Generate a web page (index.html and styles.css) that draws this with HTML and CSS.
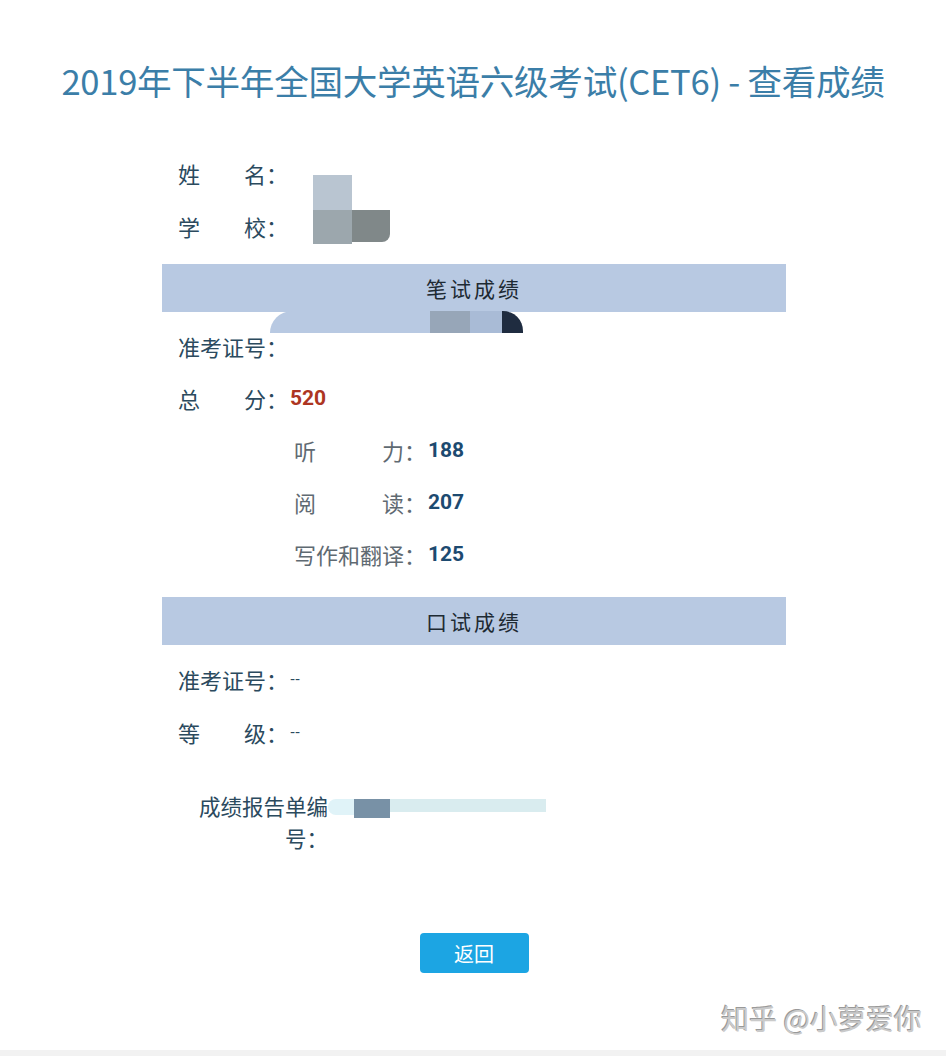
FILE: index.html
```html
<!DOCTYPE html>
<html lang="zh-CN">
<head>
<meta charset="utf-8">
<title>查看成绩</title>
<link rel="stylesheet" href="styles.css">
</head>
<body>
<div class="page">
  <h1 class="title">2019年下半年全国大学英语六级考试(CET6) - 查看成绩</h1>

  <div class="card">
    <div class="info">
      <div class="row"><span class="lbl">姓名</span><span class="colon">：</span><span class="val"></span></div>
      <div class="row"><span class="lbl">学校</span><span class="colon">：</span><span class="val"></span></div>
      <div class="mosaic m-name">
        <i class="tile t1"></i><i class="tile t2"></i><i class="tile t3"></i>
      </div>
    </div>

    <div class="bar">笔试成绩</div>

    <div class="info written">
      <div class="mosaic m-id">
        <i class="tile t4"></i><i class="tile t5"></i><i class="tile t6"></i><i class="tile t7"></i>
      </div>
      <div class="row"><span class="lbl">准考证号</span><span class="colon">：</span><span class="val"></span></div>
      <div class="row"><span class="lbl">总分</span><span class="colon">：</span><span class="val total">520</span></div>
      <div class="row sub"><span class="lbl wide">听力</span><span class="colon">：</span><span class="val score">188</span></div>
      <div class="row sub"><span class="lbl wide">阅读</span><span class="colon">：</span><span class="val score">207</span></div>
      <div class="row sub"><span class="lbl wide">写作和翻译</span><span class="colon">：</span><span class="val score">125</span></div>
    </div>

    <div class="bar bar2">口试成绩</div>

    <div class="info oral">
      <div class="row tall"><span class="lbl">准考证号</span><span class="colon">：</span><span class="val dash">--</span></div>
      <div class="row tall"><span class="lbl">等级</span><span class="colon">：</span><span class="val dash">--</span></div>
    </div>

    <div class="report">
      <span class="report-lbl">成绩报告单编号：</span>
      <span class="report-val"><i class="tile t8"></i><i class="tile t9"></i><i class="tile t10"></i></span>
    </div>

    <div class="actions"><button class="btn" type="button">返回</button></div>
  </div>

  <div class="watermark">知乎 @小萝爱你</div>
  <div class="bottom-strip"></div>
</div>
</body>
</html>
```

FILE: styles.css
```css
html, body {
  margin: 0;
  padding: 0;
  background: #ffffff;
}
body {
  font-family: "Noto Sans CJK SC", "Noto Sans", sans-serif;
  width: 946px;
  height: 1056px;
  overflow: hidden;
}
.page {
  position: relative;
  height: 1056px;
  display: flex;
  flex-direction: column;
}
.title {
  margin: 56px 0 0 0;
  font-weight: 400;
  font-size: 34.6px;
  line-height: 48px;
  color: #3b7ea8;
  text-align: center;
  letter-spacing: -0.3px;
}
.card {
  width: 624px;
  margin: 42px 0 0 162px;
  display: flex;
  flex-direction: column;
}
.info {
  position: relative;
  padding-left: 16px;
}
.row {
  display: flex;
  align-items: center;
  height: 52px;
  font-size: 22px;
  color: #2b4a5e;
}
.row.tall {
  height: 53px;
}
.info:first-child .row {
  height: 53px;
}
.lbl {
  display: inline-block;
  width: 88px;
  text-align: justify;
  text-align-last: justify;
  white-space: nowrap;
}
.lbl.wide {
  width: 110px;
}
.colon {
  width: 24px;
}
.val {
  font-family: "Roboto", "Liberation Sans", sans-serif;
}
.total {
  color: #ad3522;
  font-weight: 700;
  font-size: 21px;
}
.sub {
  padding-left: 116px;
  color: #5f6a72;
}
.sub .colon {
  color: #5f6a72;
}
.score {
  color: #1d4a70;
  font-weight: 700;
  font-size: 21px;
}
.dash {
  font-family: "DejaVu Sans", sans-serif;
  color: #2b4a5e;
  font-size: 14px;
  letter-spacing: 0;
}
.bar {
  margin-top: 12px;
  height: 48px;
  background: #b8c9e2;
  display: flex;
  align-items: center;
  justify-content: center;
  font-size: 21px;
  letter-spacing: 3px;
  color: #1e2a33;
}
.written {
  margin-top: 8px;
}
.bar2 {
  margin-top: 17px;
}
.oral {
  margin-top: 7px;
}
.mosaic {
  position: absolute;
  left: 0;
  top: 0;
}
.tile {
  position: absolute;
  display: block;
}
.m-name .t1 { left: 151px; top: 29px; width: 39px; height: 38px; background: #b9c5d1; }
.m-name .t2 { left: 151px; top: 64px; width: 39px; height: 34px; background: #9ca7ad; }
.m-name .t3 { left: 190px; top: 64px; width: 38px; height: 32px; background: #808889; border-radius: 0 0 8px 0; }
.m-id .t4 { left: 108px; top: -9px; width: 160px; height: 22px; background: #b8c9e2; border-radius: 30px 0 0 0; }
.m-id .t5 { left: 268px; top: -9px; width: 40px; height: 22px; background: #97a6b8; }
.m-id .t6 { left: 308px; top: -9px; width: 32px; height: 22px; background: #a9bbd6; }
.m-id .t7 { left: 340px; top: -9px; width: 21px; height: 22px; background: #1f2c40; border-radius: 0 20px 0 0; }
.report {
  margin-top: 32px;
  display: flex;
  align-items: flex-start;
  padding-left: 32px;
}
.report-lbl {
  width: 134px;
  text-align: right;
  font-size: 21.5px;
  line-height: 32px;
  color: #2b4a5e;
}
.report-val {
  position: relative;
  display: block;
  width: 220px;
  height: 32px;
}
.t8 { left: 0; top: 9px; width: 28px; height: 16px; background: #e0f3f8; border-radius: 10px 0 0 10px; }
.t9 { left: 26px; top: 9px; width: 36px; height: 19px; background: #7891a6; }
.t10 { left: 62px; top: 9px; width: 156px; height: 13px; background: #d9ecef; }
.actions {
  display: flex;
  justify-content: center;
  margin-top: 79px;
}
.btn {
  width: 109px;
  height: 40px;
  border: none;
  border-radius: 4px;
  background: #1ca5e3;
  color: #ffffff;
  font-family: "Noto Sans CJK SC", sans-serif;
  font-size: 20px;
  padding: 0;
  margin-left: 0;
}
.watermark {
  position: absolute;
  right: 24px;
  top: 998px;
  font-size: 28px;
  line-height: 40px;
  color: #cacaca;
  text-shadow: -1px -1px 0 #999999;
}
.bottom-strip {
  position: absolute;
  left: 0;
  right: 0;
  bottom: 0;
  height: 6px;
  background: #f2f2f2;
}
```
